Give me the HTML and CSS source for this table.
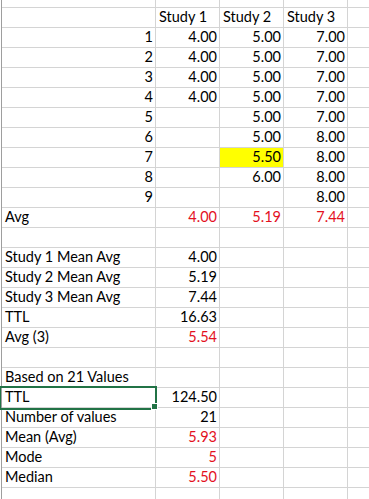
FILE: index.html
```html
<!DOCTYPE html>
<html>
<head>
<meta charset="utf-8">
<link rel="stylesheet" href="styles.css">
</head>
<body>
<div class="sheet">
  <div class="c top"></div><div class="c top"></div><div class="c top"></div><div class="c top"></div><div class="c top last"></div>

  <div class="c"></div><div class="c">Study 1</div><div class="c">Study 2</div><div class="c">Study 3</div><div class="c last"></div>

  <div class="c n">1</div><div class="c n">4.00</div><div class="c n">5.00</div><div class="c n">7.00</div><div class="c last"></div>
  <div class="c n">2</div><div class="c n">4.00</div><div class="c n">5.00</div><div class="c n">7.00</div><div class="c last"></div>
  <div class="c n">3</div><div class="c n">4.00</div><div class="c n">5.00</div><div class="c n">7.00</div><div class="c last"></div>
  <div class="c n">4</div><div class="c n">4.00</div><div class="c n">5.00</div><div class="c n">7.00</div><div class="c last"></div>
  <div class="c n">5</div><div class="c n"></div><div class="c n">5.00</div><div class="c n">7.00</div><div class="c last"></div>
  <div class="c n">6</div><div class="c n"></div><div class="c n">5.00</div><div class="c n">8.00</div><div class="c last"></div>
  <div class="c n">7</div><div class="c n"></div><div class="c n hl">5.50</div><div class="c n">8.00</div><div class="c last"></div>
  <div class="c n">8</div><div class="c n"></div><div class="c n">6.00</div><div class="c n">8.00</div><div class="c last"></div>
  <div class="c n">9</div><div class="c n"></div><div class="c n"></div><div class="c n">8.00</div><div class="c last"></div>

  <div class="c">Avg</div><div class="c n red">4.00</div><div class="c n red">5.19</div><div class="c n red">7.44</div><div class="c last"></div>
  <div class="c"></div><div class="c"></div><div class="c"></div><div class="c"></div><div class="c last"></div>

  <div class="c">Study 1 Mean Avg</div><div class="c n">4.00</div><div class="c"></div><div class="c"></div><div class="c last"></div>
  <div class="c">Study 2 Mean Avg</div><div class="c n">5.19</div><div class="c"></div><div class="c"></div><div class="c last"></div>
  <div class="c">Study 3 Mean Avg</div><div class="c n">7.44</div><div class="c"></div><div class="c"></div><div class="c last"></div>
  <div class="c">TTL</div><div class="c n">16.63</div><div class="c"></div><div class="c"></div><div class="c last"></div>
  <div class="c">Avg (3)</div><div class="c n red">5.54</div><div class="c"></div><div class="c"></div><div class="c last"></div>
  <div class="c"></div><div class="c"></div><div class="c"></div><div class="c"></div><div class="c last"></div>

  <div class="c">Based on 21 Values</div><div class="c"></div><div class="c"></div><div class="c"></div><div class="c last"></div>
  <div class="c sel">TTL<span class="handle"></span></div><div class="c n">124.50</div><div class="c"></div><div class="c"></div><div class="c last"></div>
  <div class="c">Number of values</div><div class="c n">21</div><div class="c"></div><div class="c"></div><div class="c last"></div>
  <div class="c">Mean (Avg)</div><div class="c n red">5.93</div><div class="c"></div><div class="c"></div><div class="c last"></div>
  <div class="c">Mode</div><div class="c n red">5</div><div class="c"></div><div class="c"></div><div class="c last"></div>
  <div class="c">Median</div><div class="c n red">5.50</div><div class="c"></div><div class="c"></div><div class="c last"></div>
  <div class="c"></div><div class="c"></div><div class="c"></div><div class="c"></div><div class="c last"></div>
</div>
</body>
</html>
```
FILE: styles.css
```css
html, body {
  margin: 0;
  padding: 0;
  background: #ffffff;
}
body {
  width: 369px;
  height: 499px;
  overflow: hidden;
}
.sheet {
  margin-left: 1px;
  border-left: 1px solid #9e9e9e;
  display: grid;
  grid-template-columns: 154px 64px 64px 64px 1fr;
  grid-template-rows: 8px;
  grid-auto-rows: 20px;
  font-family: Lato, "Open Sans", sans-serif;
  font-size: 14.5px;
  color: #000000;
}
.c {
  box-sizing: border-box;
  border-right: 1px solid #d4d4d4;
  border-bottom: 1px solid #d4d4d4;
  padding: 0 2px 2px 3px;
  display: flex;
  align-items: flex-end;
  justify-content: flex-start;
  white-space: nowrap;
  line-height: 16px;
  position: relative;
}
.c.last {
  border-right: none;
}
.n {
  justify-content: flex-end;
}
.red {
  color: #e3101e;
}
.hl {
  background: #ffff00;
}
.sel::after {
  content: "";
  position: absolute;
  left: -3px;
  top: -2px;
  width: 158px;
  height: 24px;
  box-sizing: border-box;
  border: 2px solid #217346;
}
.handle {
  position: absolute;
  left: 149px;
  top: 15px;
  width: 7px;
  height: 7px;
  box-sizing: border-box;
  background: #217346;
  border: 1px solid #ffffff;
  z-index: 2;
}
```
